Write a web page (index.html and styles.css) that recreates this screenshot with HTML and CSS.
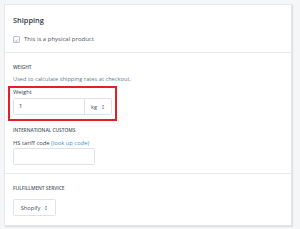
FILE: index.html
```html
<!DOCTYPE html>
<html>
<head>
<meta charset="utf-8">
<link rel="stylesheet" href="styles.css">
</head>
<body>
<div class="card">
  <section class="sec sec-head">
    <h2 class="title">Shipping</h2>
    <label class="check-row">
      <span class="checkbox">
        <svg width="7" height="7" viewBox="0 0 7 7"><path d="M1.6 3.6 L2.9 4.9 L5.4 2.1" fill="none" stroke="#5c6ac4" stroke-width="0.8"/></svg>
      </span>
      <span class="check-text">This is a physical product</span>
    </label>
  </section>
  <section class="sec sec-weight">
    <div class="subhead">WEIGHT</div>
    <div class="desc">Used to calculate shipping rates at checkout.</div>
    <div class="highlight">
      <div class="label">Weight</div>
      <div class="field weight-field">
        <span class="value">1</span>
        <span class="unit">kg
          <svg class="arrows" width="4" height="6" viewBox="0 0 4 6"><path d="M0.6 2.3 L2 0.9 L3.4 2.3 Z M0.6 3.7 L2 5.1 L3.4 3.7 Z" fill="#637381"/></svg>
        </span>
      </div>
    </div>
    <div class="subhead customs">INTERNATIONAL CUSTOMS</div>
    <div class="label hs">HS tariff code <span class="link">(look up code)</span></div>
    <div class="field hs-field"></div>
  </section>
  <section class="sec sec-ful">
    <div class="subhead">FULFILLMENT SERVICE</div>
    <div class="field select">
      <span>Shopify</span>
      <svg class="arrows" width="4" height="6" viewBox="0 0 4 6"><path d="M0.6 2.3 L2 0.9 L3.4 2.3 Z M0.6 3.7 L2 5.1 L3.4 3.7 Z" fill="#637381"/></svg>
    </div>
  </section>
</div>
</body>
</html>
```
FILE: styles.css
```css
* { box-sizing: border-box; margin: 0; padding: 0; }
html, body { width: 300px; height: 229px; overflow: hidden; }
body {
  background: #f4f6f8;
  font-family: "Open Sans", "Noto Sans", sans-serif;
  color: #212b36;
  padding: 4px 0 0 4px;
}
.card {
  width: 288px;
  height: 222px;
  background: #fff;
  border: 1px solid #e4e7ec;
  box-shadow: 1px 1px 1px rgba(63,63,68,0.12);
}
.sec { padding-left: 8px; }
.sec-weight, .sec-ful { border-top: 1px solid #e6e9ee; }
.sec-head { padding-top: 10px; padding-bottom: 9px; }
.title {
  font-size: 7.4px;
  font-weight: 600;
  line-height: 10px;
  color: #2f3a46;
}
.check-row {
  display: flex;
  align-items: center;
  margin-top: 10px;
  height: 8px;
}
.checkbox {
  width: 7px; height: 7px;
  border: 0.7px solid #b7bfc9;
  border-radius: 1px;
  display: flex;
  margin-right: 4px;
}
.check-text { font-size: 6px; line-height: 8px; color: #4a5562; }
.sec-weight { padding-top: 10px; padding-bottom: 8px; }
.subhead {
  font-size: 4.9px;
  font-weight: 600;
  line-height: 8px;
  letter-spacing: -0.05px;
  color: #505b68;
}
.desc {
  font-size: 5.7px;
  line-height: 8px;
  color: #6b7a8a;
  margin-top: 4px;
}
.highlight {
  width: 109px;
  margin: 3px 0 0 -5px;
  border: 2px solid #e51e27;
  padding: 0 3px 4px 3px;
}
.label { font-size: 5.8px; line-height: 8px; color: #3a4450; }
.field {
  height: 17px;
  border: 1px solid #dfe3e8;
  border-radius: 1.5px;
  background: #fff;
}
.weight-field {
  margin-top: 2px;
  width: 99px;
  display: flex;
  align-items: stretch;
}
.value { flex: 1; font-size: 5.7px; line-height: 15px; padding-left: 5px; }
.unit {
  width: 27px;
  border-left: 1px solid #dfe3e8;
  display: flex;
  align-items: center;
  justify-content: center;
  gap: 4px;
  font-size: 5.7px;
  color: #454f5b;
}
.customs { margin-top: 5px; }
.hs { margin-top: 5px; }
.link { color: #3d8fd1; }
.hs-field { width: 82px; margin-top: 1px; }
.sec-ful { padding-top: 10px; }
.select {
  margin-top: 7px;
  width: 43px;
  display: flex;
  align-items: center;
  justify-content: center;
  gap: 4px;
  font-size: 5.7px;
  color: #454f5b;
}
.arrows { display: block; }
```
